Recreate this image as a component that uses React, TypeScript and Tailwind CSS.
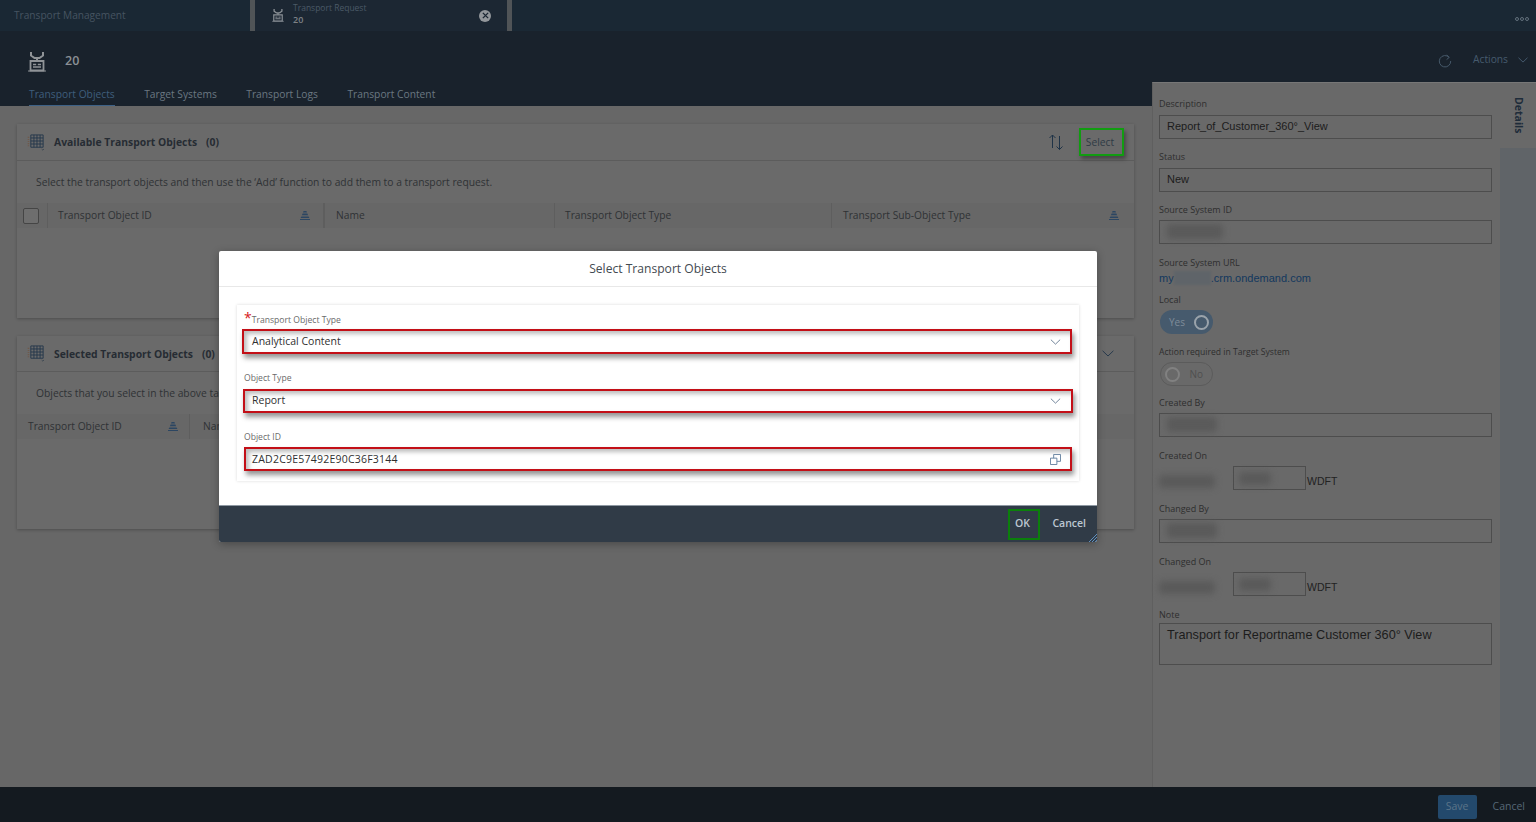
import React from "react";

const sans = "font-['Open_Sans','Noto_Sans',sans-serif]";

function TransportIcon({ className }: { className: string }) {
  return (
    <svg viewBox="0 0 18 20" className={className} fill="none" stroke="currentColor" strokeWidth="2">
      <path d="M3 0v3.5L6.5 6h5L15 3.500V0M9 6v3" />
      <path d="M2.500 9h13v9.500h-13z" strokeWidth="1.8" />
      <path d="M5 12.500h3.200M9.800 12.500H13M5 15h8" strokeWidth="1.500" />
      <path d="M0 19h18" strokeWidth="1" />
    </svg>
  );
}

function TableIcon() {
  return (
    <svg viewBox="0 0 20 18" className="w-[19px] h-[17px] shrink-0" fill="none">
      <path d="M4 1h13v13H4zM4 4.200h13M4 7.400h13M4 10.600h13M7.300 1v13M10.500 1v13M13.800 1v13" stroke="#24374b" strokeWidth="1" />
      <path d="M1.500 3v11" stroke="#6f5a4c" strokeWidth="1.600" strokeDasharray="1.200 1" />
      <path d="M15.500 16l1.200 1 1.200-1" stroke="#33404d" strokeWidth=".8" />
    </svg>
  );
}

function SortIcon() {
  return (
    <svg viewBox="0 0 10 9" className="w-[10px] h-[9px] shrink-0" fill="#2c4662">
      <path d="M3.600 0h2.800l.6 1.600H3zM2.600 2.600h4.800l.7 1.700H1.900zM1.400 5.400h7.200L9.400 7H.6zM0 8h10v1H0z" />
    </svg>
  );
}

function Chevron({ color, className }: { color: string; className: string }) {
  return (
    <svg viewBox="0 0 12 7" className={className} fill="none" stroke={color} strokeWidth="1">
      <path d="M.6.8 6 6l5.400-5.200" />
    </svg>
  );
}

function Smudge({ className }: { className: string }) {
  return <div className={`bg-[#5a5a5a] blur-[3px] rounded-sm ${className}`} />;
}

function Label({ children, className = "text-[9px]" }: { children: React.ReactNode; className?: string }) {
  return <div className={`leading-[12px] text-[#2e2e2e] h-[12px] ${className}`}>{children}</div>;
}

function Box({ children, className = "" }: { children?: React.ReactNode; className?: string }) {
  return (
    <div className={`h-[24px] w-[333px] border border-[#4d4d4d] bg-[#696969] px-[7px] pb-[1px] flex items-center font-['Liberation_Sans',sans-serif] text-[11px] text-[#1c1c1c] ${className}`}>
      {children}
    </div>
  );
}

function Cell({ children, className = "" }: { children: React.ReactNode; className?: string }) {
  return <div className={`h-full flex items-center text-[10.25px] text-[#2f3235] ${className}`}>{children}</div>;
}

function DateRow() {
  return (
    <div className="flex items-start h-[24px] mt-[4px]">
      <Smudge className="w-[56px] h-[13px] mt-[9px]" />
      <div className="ml-[18px] h-[24px] w-[73px] border border-[#4d4d4d] flex items-center pl-[5px]">
        <Smudge className="w-[32px] h-[13px]" />
      </div>
      <span className="ml-[1px] mt-[9px] leading-[12px] font-['Liberation_Sans',sans-serif] text-[10.5px] text-[#222222]">WDFT</span>
    </div>
  );
}

function RedField({ box, children, icon, textClass = "" }: { box: string; children: React.ReactNode; icon: React.ReactNode; textClass?: string }) {
  return (
    <div className={`border-2 border-[#c30f17] bg-white flex items-center justify-between shadow-[2px_4px_5px_rgba(0,0,0,0.42),inset_3px_3px_4px_rgba(0,0,0,0.26)] ${box}`}>
      <span className={`text-[10.5px] text-[#2f2f2f] ${textClass}`}>{children}</span>
      {icon}
    </div>
  );
}

export default function App() {
  return (
    <div className={`${sans} relative w-[1536px] h-[822px] overflow-hidden flex flex-col bg-[#676767]`}>
      {/* shell bar */}
      <div className="h-[31px] shrink-0 flex bg-[#1a2834]">
        <div className="w-[250px] pl-[14px] flex items-center text-[10.15px] text-[#465461]">Transport Management</div>
        <div className="w-[5px] bg-[#505457]" />
        <div className="w-[252px] bg-[#1c2733] flex items-center pl-[17px] pr-[16px]">
          <TransportIcon className="w-[12px] h-[13px] text-[#8b9197]" />
          <div className="ml-[9px] flex-1 mt-[-3px]">
            <div className="text-[8.5px] leading-[10px] text-[#4b5a67]">Transport Request</div>
            <div className="text-[9px] leading-[11px] font-semibold text-[#7d8186] mt-[1px]">20</div>
          </div>
          <div className="w-[12px] h-[12px] rounded-full bg-[#93979b] flex items-center justify-center">
            <svg viewBox="0 0 8 8" className="w-[7px] h-[7px]" stroke="#1c2733" strokeWidth="1.600"><path d="M1 1l6 6M7 1 1 7" /></svg>
          </div>
        </div>
        <div className="w-[5px] bg-[#505457]" />
        <div className="flex-1 flex items-center justify-end pr-[7px] pt-[6px] gap-[1px]">
          <span className="w-[4px] h-[4px] rounded-full border border-[#62707c]" />
          <span className="w-[4px] h-[4px] rounded-full border border-[#62707c]" />
          <span className="w-[4px] h-[4px] rounded-full border border-[#62707c]" />
        </div>
      </div>

      {/* object header */}
      <div className="h-[51px] shrink-0 bg-[#19222c] flex items-center pl-[28px] pr-[8px]">
        <TransportIcon className="w-[18px] h-[20px] mt-[10px] text-[#8f9397]" />
        <span className="ml-[19px] mt-[10px] text-[12.5px] font-semibold text-[#8b9096]">20</span>
        <div className="ml-auto flex items-center mt-[7px]">
          <svg viewBox="0 0 14 14" className="w-[14px] h-[14px] mt-[2px]" fill="none" stroke="#46596a" strokeWidth="1">
            <path d="M11.200 3.400A5.700 5.700 0 1 0 12.700 7M8.600 .8l2.600 2.600-2.600 2.200" />
          </svg>
          <span className="ml-[21px] text-[10.25px] text-[#465b6e]">Actions</span>
          <Chevron color="#4d6479" className="ml-[10px] w-[10px] h-[6px]" />
        </div>
      </div>

      <div className="flex-1 min-h-0 flex">
        {/* main column */}
        <div className="w-[1152px] flex flex-col">
          <div className="h-[24px] shrink-0 bg-[#19222c] flex pl-[29px] gap-[29.5px] text-[10.25px] text-[#6b7882]">
            <div className="h-full pt-[5px] border-b border-[#3e6287] text-[#3f5e7c]">Transport Objects</div>
            <div className="pt-[5px]">Target Systems</div>
            <div className="pt-[5px]">Transport Logs</div>
            <div className="pt-[5px]">Transport Content</div>
          </div>

          <div className="flex-1 pt-[18px] pl-[17px] pr-[18px]">
            {/* available */}
            <div className="h-[194px] bg-[#6a6a6a] shadow-[0_1px_3px_rgba(0,0,0,0.25)]">
              <div className="h-[37px] border-b border-[#5c5c5c] flex items-center pl-[10px]">
                <TableIcon />
                <span className="ml-[8px] mt-[2px] text-[10.35px] font-bold text-[#262c33]">Available Transport Objects</span>
                <span className="ml-[9px] mt-[2px] text-[10.35px] font-bold text-[#262c33]">(0)</span>
                <svg viewBox="0 0 16 16" className="ml-auto w-[16px] h-[16px]" fill="none" stroke="#1f3347" strokeWidth="1">
                  <path d="M4.500 14V1M1.500 4l3-3 3 3M11.500 2v13.500M8.500 12.500l3 3 3-3" />
                </svg>
                <div className="ml-[15px] mr-[10px] w-[45px] h-[28px] border-2 border-[#119c11] flex items-center justify-center pt-[1px] pr-[3px] text-[10.25px] text-[#2f3a45] shadow-[2px_3px_4px_rgba(0,0,0,0.35)]">Select</div>
              </div>
              <div className="h-[42px] pl-[19px] pt-[13px] text-[10.3px] leading-[16px] text-[#2f3235]">
                Select the transport objects and then use the ‘Add’ function to add them to a transport request.
              </div>
              <div className="h-[25px] flex bg-[#676767]">
                <div className="w-[31px] flex items-center justify-center border-r border-[#5e5e5e]">
                  <div className="w-[16px] h-[16px] rounded-[2px] border border-[#454545] bg-[#6e6e6e] ml-[-3px]" />
                </div>
                <Cell className="w-[277px] pl-[10px] pr-[13px] justify-between border-r-2 border-[#5e5e5e]"><span>Transport Object ID</span><SortIcon /></Cell>
                <Cell className="w-[230px] pl-[11px] border-r border-[#5e5e5e]">Name</Cell>
                <Cell className="w-[277px] pl-[10px] border-r border-[#5e5e5e]">Transport Object Type</Cell>
                <Cell className="flex-1 pl-[11px] pr-[15px] justify-between"><span>Transport Sub-Object Type</span><SortIcon /></Cell>
              </div>
            </div>

            {/* selected */}
            <div className="mt-[18px] h-[193px] bg-[#6a6a6a] shadow-[0_1px_3px_rgba(0,0,0,0.25)]">
              <div className="h-[36px] border-b border-[#5c5c5c] flex items-center pl-[10px]">
                <TableIcon />
                <span className="ml-[8px] mt-[2px] text-[10.35px] font-bold text-[#262c33]">Selected Transport Objects</span>
                <span className="ml-[9px] mt-[2px] text-[10.35px] font-bold text-[#262c33]">(0)</span>
                <Chevron color="#27394c" className="ml-auto mr-[20px] w-[12px] h-[7px]" />
              </div>
              <div className="h-[42px] pl-[19px] pt-[13px] text-[10.3px] leading-[16px] text-[#2f3235]">
                Objects that you select in the above table will be listed here.
              </div>
              <div className="h-[25px] flex bg-[#676767]">
                <Cell className="w-[173px] pl-[11px] pr-[11px] justify-between border-r border-[#5e5e5e]"><span>Transport Object ID</span><SortIcon /></Cell>
                <Cell className="pl-[13px]">Name</Cell>
              </div>
            </div>
          </div>
        </div>

        {/* details */}
        <div className="flex-1 flex bg-[#696969] border-l border-[#5f5f5f] border-t border-t-[#777777]">
          <div className="w-[347px] pl-[6px] pt-[15px] flex flex-col">
            <Label>Description</Label>
            <Box className="mt-[5px]">Report_of_Customer_360°_View</Box>
            <div className="mt-[12px]"><Label>Status</Label></div>
            <Box className="mt-[5px]">New</Box>
            <div className="mt-[12px]"><Label>Source System ID</Label></div>
            <Box className="mt-[4px]"><Smudge className="w-[56px] h-[15px]" /></Box>
            <div className="mt-[13px]"><Label>Source System URL</Label></div>
            <div className="mt-[2px] h-[14px] flex items-center text-[11px] text-[#13385e] font-['Liberation_Sans',sans-serif]">
              <span>my</span><span className="w-[37px] h-[14px] bg-[#5f6469] blur-[1px]" /><span>.crm.ondemand.com</span>
            </div>
            <div className="mt-[9px]"><Label>Local</Label></div>
            <div className="mt-[4px] ml-[1px] w-[53px] h-[24px] rounded-full bg-[#465a6d] flex items-center justify-between pl-[9px] pr-[4px]">
              <span className="text-[10px] text-[#7f8c99]">Yes</span>
              <span className="w-[15px] h-[15px] rounded-full border-2 border-[#9aa3ab]" />
            </div>
            <div className="mt-[12px]"><Label className="text-[8.6px]">Action required in Target System</Label></div>
            <div className="mt-[4px] ml-[1px] w-[53px] h-[24px] rounded-full border border-[#5b5b5b] flex items-center justify-between pl-[4px] pr-[9px]">
              <span className="w-[15px] h-[15px] rounded-full border-2 border-[#818181]" />
              <span className="text-[10px] text-[#4f4f4f]">No</span>
            </div>
            <div className="mt-[11px]"><Label>Created By</Label></div>
            <Box className="mt-[4px]"><Smudge className="w-[50px] h-[15px]" /></Box>
            <div className="mt-[13px]"><Label>Created On</Label></div>
            <DateRow />
            <div className="mt-[13px]"><Label>Changed By</Label></div>
            <Box className="mt-[4px]"><Smudge className="w-[50px] h-[15px]" /></Box>
            <div className="mt-[13px]"><Label>Changed On</Label></div>
            <DateRow />
            <div className="mt-[13px]"><Label>Note</Label></div>
            <div className="mt-[2px] w-[333px] h-[42px] border border-[#4d4d4d] pl-[7px] pt-[3px] font-['Liberation_Sans',sans-serif] text-[12.7px] leading-[16px] text-[#1c1c1c]">
              Transport for Reportname Customer 360° View
            </div>
          </div>
          <div className="flex-1 flex flex-col bg-[#606468]">
            <div className="h-[65px] bg-[#696969] flex justify-center pt-[14px]">
              <span className="[writing-mode:vertical-rl] text-[10.5px] font-bold text-[#1e2c3a] h-fit">Details</span>
            </div>
          </div>
        </div>
      </div>

      {/* footer */}
      <div className="h-[35px] shrink-0 bg-[#141a20] flex items-center justify-end pr-[11px] pt-[4px]">
        <div className="w-[39px] h-[24px] rounded-[2px] bg-[#23496c] flex items-center justify-center text-[10.5px] text-[#5b7488]">Save</div>
        <span className="ml-[16px] text-[10.5px] text-[#566876]">Cancel</span>
      </div>

      {/* dialog */}
      <div className="absolute left-[219px] top-[251px] w-[878px] h-[291px] rounded-[2px] bg-white flex flex-col shadow-[0_2px_8px_rgba(0,0,0,0.3)] overflow-hidden">
        <div className="h-[36px] shrink-0 border-b border-[#e8e8e8] pt-[1px] flex items-center justify-center text-[12.1px] text-[#434a51]">Select Transport Objects</div>
        <div className="mx-[18px] mt-[18px] h-[176px] shadow-[0_0_3px_rgba(0,0,0,0.15)] pl-[5px] pr-[6px] pt-[7px] flex flex-col">
          <div className="h-[17px] flex items-start text-[8.6px] leading-[11px] text-[#6a6a6a]">
            <span className="text-[#d62020] text-[14px] leading-[12px] h-[12px] ml-[2px]">*</span><span className="mt-[3px]">Transport Object Type</span>
          </div>
          <RedField box="h-[25px] w-[830px] pl-[8px] pr-[9px]" textClass="mt-[1px]" icon={<Chevron color="#5b728a" className="w-[11px] h-[6px]" />}>Analytical Content</RedField>
          <div className="mt-[19px] ml-[2px] h-[11px] flex items-center text-[8.6px] leading-[11px] text-[#6a6a6a]">Object Type</div>
          <RedField box="mt-[5px] ml-[1px] h-[24px] w-[830px] pl-[7px] pr-[10px]" icon={<Chevron color="#5b728a" className="w-[11px] h-[6px]" />}>Report</RedField>
          <div className="mt-[19px] ml-[2px] h-[11px] flex items-center text-[8.6px] leading-[11px] text-[#6a6a6a]">Object ID</div>
          <RedField box="mt-[4px] ml-[2px] h-[24px] w-[828px] pl-[6px] pr-[9px]" textClass="mt-[1px] tracking-[0.22px]" icon={
            <svg viewBox="0 0 12 12" className="w-[11px] h-[11px]" fill="none" stroke="#5f7d9c" strokeWidth="1">
              <path d="M.5 4.500h7v7h-7zM4 4.500V.5h7.500v7.500H7.500" />
            </svg>
          }>ZAD2C9E57492E90C36F3144</RedField>
        </div>
        <div className="mt-auto h-[37px] shrink-0 bg-[#303b47] border-t border-[#8e98a2] flex items-center justify-end pr-[11px] relative">
          <div className="w-[32px] h-[31px] border-2 border-[#0b7f0b] flex items-center justify-center pr-[4px] text-[10.5px] font-semibold text-[#bdc7d1]">OK</div>
          <span className="ml-[12px] text-[10.5px] font-semibold text-[#bdc7d1]">Cancel</span>
          <svg viewBox="0 0 8 8" className="absolute right-0 bottom-0 w-[8px] h-[8px]" fill="none" stroke="#5f8fbe" strokeWidth="1"><path d="M0 8l8-8M3 8l5-5M6 8l2-2" /></svg>
        </div>
      </div>
    </div>
  );
}
